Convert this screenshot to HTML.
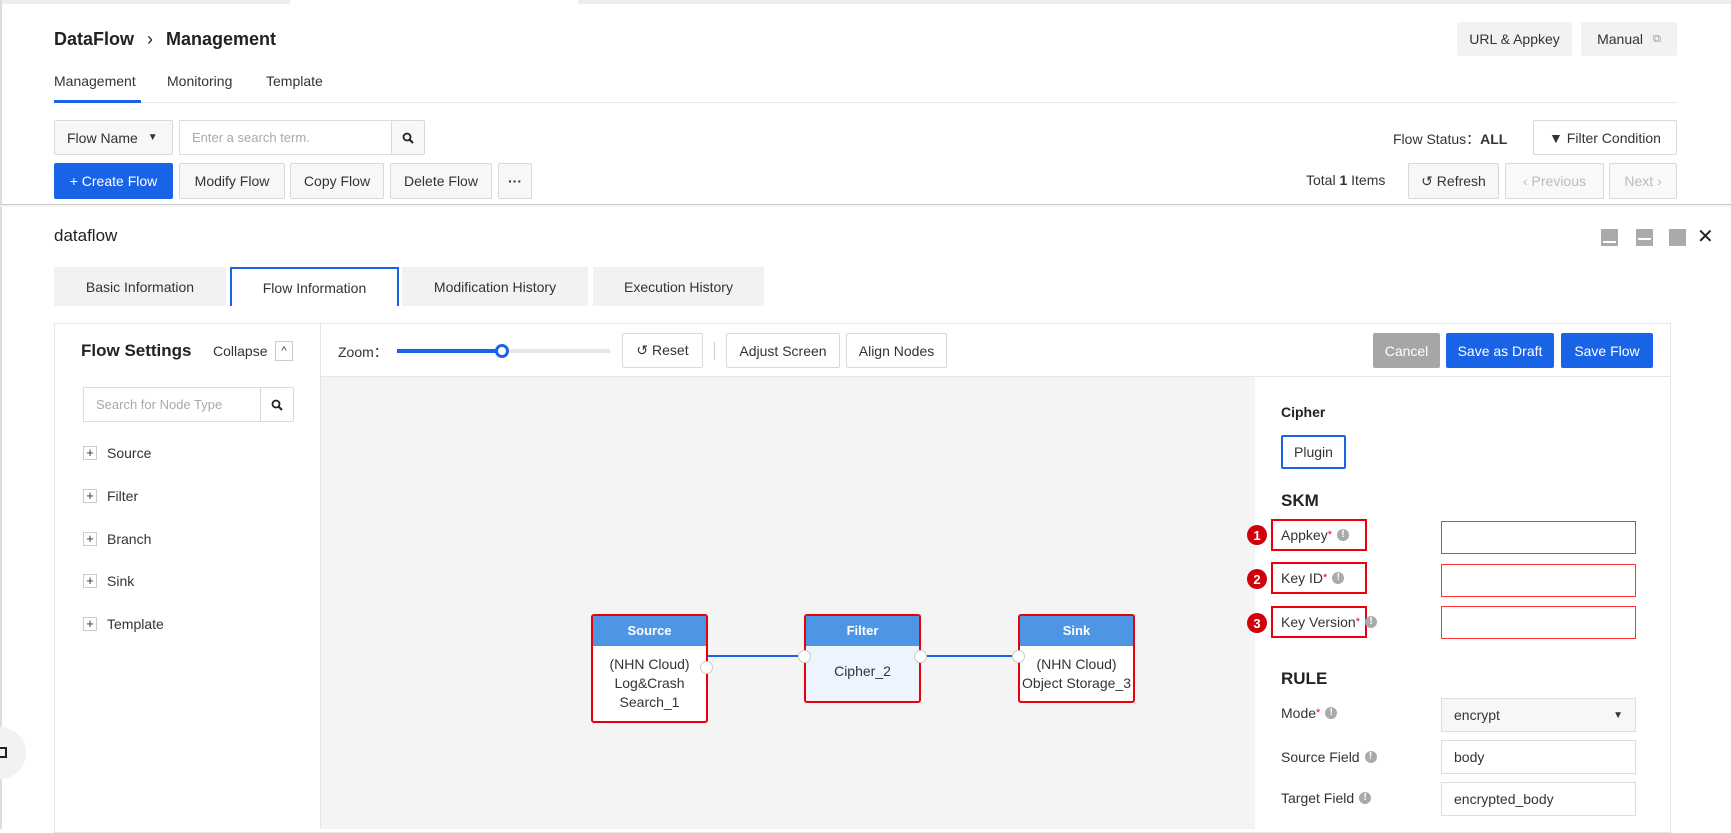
<!DOCTYPE html>
<html><head><meta charset="utf-8"><style>
*{box-sizing:border-box;margin:0;padding:0}
body{width:1731px;height:829px;overflow:hidden;background:#fff;font-family:"Liberation Sans",sans-serif;color:#333;font-size:14px;position:relative}
.a{position:absolute}
.btn{position:absolute;border:1px solid #d9d9d9;background:#f7f7f7;border-radius:2px;display:flex;align-items:center;justify-content:center;font-size:14px;color:#333;white-space:nowrap}
.gb{position:absolute;background:#f2f2f2;border-radius:2px;display:flex;align-items:center;justify-content:center;font-size:14px;color:#333}
.blue{background:#1863e6;border-color:#1863e6;color:#fff}
.inp{position:absolute;border:1px solid #ddd;background:#fff;display:flex;align-items:center;padding-left:12px;font-size:14px}
.tab{position:absolute;top:267px;height:39px;background:#f2f2f2;display:flex;align-items:center;justify-content:center;font-size:14px}
.tree{position:absolute;left:83px;font-size:14px;display:flex;align-items:center}
.tree i{display:inline-block;width:14px;height:14px;border:1px solid #ccc;font-style:normal;font-size:13px;line-height:11px;text-align:center;margin-right:10px;color:#333}
.node{position:absolute;border:2px solid #e8000b;border-radius:3px;background:#fff;text-align:center;font-size:14px}
.node .h{background:#4d96e6;color:#fff;font-weight:bold;height:30px;line-height:30px;font-size:13px}
.port{position:absolute;width:13px;height:13px;border-radius:50%;background:#fff;border:1px solid #ccc}
.lbl{position:absolute;font-size:14px;display:flex;align-items:center}
.rb{position:absolute;border:2px solid #e8000b}
.bad{position:absolute;width:20px;height:20px;border-radius:50%;background:#d0000b;color:#fff;font-weight:bold;font-size:13px;display:flex;align-items:center;justify-content:center}
.ex{display:inline-block;width:12px;height:12px;border-radius:50%;background:#aaa;color:#fff;font-size:10px;font-weight:bold;text-align:center;line-height:12px;margin-left:5px}
.st{color:#e8000b;font-size:11px;vertical-align:top}
</style></head><body>
<div class="a" style="left:0;top:0;width:290px;height:4px;background:#eee"></div>
<div class="a" style="left:578px;top:0;width:1153px;height:4px;background:#eee"></div>
<div class="a" style="left:0;top:0;width:2px;height:829px;background:#ddd"></div>

<div class="a" style="left:54px;top:29px;font-size:18px;font-weight:bold;color:#222">DataFlow <span style="font-weight:normal;margin:0 8px">›</span> Management</div>
<div class="gb" style="left:1457px;top:22px;width:115px;height:34px">URL &amp; Appkey</div>
<div class="gb" style="left:1581px;top:22px;width:96px;height:34px">Manual <span style="margin-left:10px;font-size:11px;color:#999">⧉</span></div>

<div class="a" style="left:54px;top:73px;font-size:14px">Management</div>
<div class="a" style="left:167px;top:73px;font-size:14px">Monitoring</div>
<div class="a" style="left:266px;top:73px;font-size:14px">Template</div>
<div class="a" style="left:54px;top:102px;width:1623px;height:1px;background:#e6e6e6"></div>
<div class="a" style="left:54px;top:100px;width:87px;height:3px;background:#1863e6"></div>

<div class="btn" style="left:54px;top:120px;width:119px;height:35px;justify-content:flex-start;padding-left:12px">Flow Name <span style="margin-left:10px;font-size:10px">▼</span></div>
<div class="inp" style="left:179px;top:120px;width:213px;height:35px;color:#aaa;font-size:13px">Enter a search term.</div>
<div class="btn" style="left:391px;top:120px;width:34px;height:35px;background:#f7f7f7"><svg width="12" height="12" viewBox="0 0 12 12"><circle cx="5" cy="5" r="3.5" fill="none" stroke="#222" stroke-width="1.8"/><path d="M7.5 7.5L11 11" stroke="#222" stroke-width="2"/></svg></div>
<div class="a" style="left:1393px;top:129px;font-size:14px">Flow Status：<b>ALL</b></div>
<div class="btn" style="left:1533px;top:120px;width:144px;height:35px;background:#fff">▼ Filter Condition</div>

<div class="btn blue" style="left:54px;top:163px;width:119px;height:36px">+ Create Flow</div>
<div class="btn" style="left:179px;top:163px;width:106px;height:36px">Modify Flow</div>
<div class="btn" style="left:290px;top:163px;width:94px;height:36px">Copy Flow</div>
<div class="btn" style="left:390px;top:163px;width:102px;height:36px">Delete Flow</div>
<div class="btn" style="left:498px;top:163px;width:34px;height:36px;font-weight:bold">···</div>
<div class="a" style="left:1306px;top:172px;font-size:14px">Total <b>1</b> Items</div>
<div class="btn" style="left:1408px;top:163px;width:91px;height:36px">↺ Refresh</div>
<div class="btn" style="left:1505px;top:163px;width:99px;height:36px;color:#bbb;background:#f9f9f9">‹ Previous</div>
<div class="btn" style="left:1609px;top:163px;width:68px;height:36px;color:#bbb;background:#f9f9f9">Next ›</div>

<div class="a" style="left:0;top:204px;width:1731px;height:3px;border-top:1px solid #ccc;background:#f3f3f3"></div>
<div class="a" style="left:54px;top:226px;font-size:17px;color:#222">dataflow</div>
<div class="a" style="left:1601px;top:229px;width:17px;height:17px;background:#aaa"><div style="margin:12px 2px 0;height:2px;background:#fff"></div></div>
<div class="a" style="left:1636px;top:229px;width:17px;height:17px;background:#aaa"><div style="margin:9px 2px 0;height:2px;background:#fff"></div></div>
<div class="a" style="left:1669px;top:229px;width:17px;height:17px;background:#aaa"></div>
<div class="a" style="left:1697px;top:224px;font-size:20px;color:#222">✕</div>

<div class="tab" style="left:54px;width:172px">Basic Information</div>
<div class="tab" style="left:230px;width:169px;background:#fff;border:2px solid #1863e6;border-bottom:none">Flow Information</div>
<div class="tab" style="left:402px;width:186px">Modification History</div>
<div class="tab" style="left:593px;width:171px">Execution History</div>

<div class="a" style="left:54px;top:323px;width:1617px;height:510px;border:1px solid #e6e6e6"></div>
<div class="a" style="left:320px;top:323px;width:1px;height:506px;background:#e6e6e6"></div>
<div class="a" style="left:81px;top:341px;font-size:17px;font-weight:bold;color:#222">Flow Settings</div>
<div class="a" style="left:213px;top:343px;font-size:14px">Collapse</div>
<div class="a" style="left:275px;top:341px;width:18px;height:20px;border:1px solid #ccc;font-size:11px;text-align:center;line-height:18px">^</div>
<div class="inp" style="left:83px;top:387px;width:178px;height:35px;color:#aaa;font-size:13px">Search for Node Type</div>
<div class="btn" style="left:260px;top:387px;width:34px;height:35px;background:#fff"><svg width="12" height="12" viewBox="0 0 12 12"><circle cx="5" cy="5" r="3.5" fill="none" stroke="#222" stroke-width="1.8"/><path d="M7.5 7.5L11 11" stroke="#222" stroke-width="2"/></svg></div>
<div class="tree" style="top:445px"><i>+</i>Source</div>
<div class="tree" style="top:488px"><i>+</i>Filter</div>
<div class="tree" style="top:531px"><i>+</i>Branch</div>
<div class="tree" style="top:573px"><i>+</i>Sink</div>
<div class="tree" style="top:616px"><i>+</i>Template</div>
<div class="a" style="left:-26px;top:727px;width:52px;height:52px;border-radius:50%;background:#f2f2f2"></div>
<div class="a" style="left:-4px;top:747px;width:11px;height:11px;border:2px solid #222"></div>

<div class="a" style="left:321px;top:376px;width:1350px;height:1px;background:#e6e6e6"></div>
<div class="a" style="left:338px;top:342px;font-size:14px">Zoom：</div>
<div class="a" style="left:397px;top:349px;width:213px;height:4px;background:#e6e6e6"></div>
<div class="a" style="left:397px;top:349px;width:105px;height:4px;background:#1863e6"></div>
<div class="a" style="left:495px;top:344px;width:14px;height:14px;border-radius:50%;background:#fff;border:3px solid #1863e6"></div>
<div class="btn" style="left:622px;top:333px;width:81px;height:35px;background:#fff">↺ Reset</div>
<div class="a" style="left:714px;top:342px;width:1px;height:18px;background:#ccc"></div>
<div class="btn" style="left:726px;top:333px;width:114px;height:35px;background:#fff">Adjust Screen</div>
<div class="btn" style="left:846px;top:333px;width:101px;height:35px;background:#fff">Align Nodes</div>
<div class="btn" style="left:1373px;top:333px;width:67px;height:35px;background:#a6a6a6;border-color:#a6a6a6;color:#fff">Cancel</div>
<div class="btn blue" style="left:1446px;top:333px;width:108px;height:35px">Save as Draft</div>
<div class="btn blue" style="left:1561px;top:333px;width:92px;height:35px">Save Flow</div>

<div class="a" style="left:321px;top:377px;width:934px;height:452px;background:#f4f4f4"></div>
<div class="a" style="left:707px;top:655px;width:97px;height:2px;background:#1863e6"></div>
<div class="a" style="left:921px;top:655px;width:97px;height:2px;background:#1863e6"></div>
<div class="node" style="left:591px;top:614px;width:117px;height:109px"><div class="h">Source</div><div style="padding-top:9px;line-height:19px">(NHN Cloud)<br>Log&amp;Crash<br>Search_1</div></div>
<div class="node" style="left:804px;top:614px;width:117px;height:89px;background:#eef4fd"><div class="h">Filter</div><div style="padding-top:17px">Cipher_2</div></div>
<div class="node" style="left:1018px;top:614px;width:117px;height:89px"><div class="h">Sink</div><div style="padding-top:9px;line-height:19px">(NHN Cloud)<br>Object Storage_3</div></div>
<div class="port" style="left:700px;top:661px"></div>
<div class="port" style="left:798px;top:650px"></div>
<div class="port" style="left:914px;top:650px"></div>
<div class="port" style="left:1012px;top:650px"></div>

<div class="a" style="left:1281px;top:404px;font-size:14px;font-weight:bold;color:#222">Cipher</div>
<div class="a" style="left:1281px;top:435px;width:65px;height:34px;border:2px solid #1863e6;border-radius:2px;display:flex;align-items:center;justify-content:center;font-size:14px">Plugin</div>
<div class="a" style="left:1281px;top:491px;font-size:17px;font-weight:bold;color:#222">SKM</div>
<div class="rb" style="left:1271px;top:519px;width:96px;height:32px"></div>
<div class="bad" style="left:1247px;top:525px">1</div>
<div class="lbl" style="left:1281px;top:527px">Appkey<span class="st">*</span><span class="ex">!</span></div>
<div class="rb" style="left:1271px;top:562px;width:96px;height:32px"></div>
<div class="bad" style="left:1247px;top:569px">2</div>
<div class="lbl" style="left:1281px;top:570px">Key ID<span class="st">*</span><span class="ex">!</span></div>
<div class="rb" style="left:1271px;top:606px;width:96px;height:32px"></div>
<div class="bad" style="left:1247px;top:613px">3</div>
<div class="lbl" style="left:1281px;top:614px">Key Version<span class="st">*</span><span class="ex">!</span></div>
<div class="a" style="left:1441px;top:521px;width:195px;height:33px;border:1px solid #f33"></div>
<div class="a" style="left:1441px;top:564px;width:195px;height:33px;border:1px solid #f33"></div>
<div class="a" style="left:1441px;top:606px;width:195px;height:33px;border:1px solid #f33"></div>
<div class="a" style="left:1281px;top:669px;font-size:17px;font-weight:bold;color:#222">RULE</div>
<div class="lbl" style="left:1281px;top:705px">Mode<span class="st">*</span><span class="ex">!</span></div>
<div class="inp" style="left:1441px;top:698px;width:195px;height:34px;background:#f7f7f7">encrypt<span style="position:absolute;right:12px;font-size:10px">▼</span></div>
<div class="lbl" style="left:1281px;top:749px">Source Field<span class="ex">!</span></div>
<div class="inp" style="left:1441px;top:740px;width:195px;height:34px">body</div>
<div class="lbl" style="left:1281px;top:790px">Target Field<span class="ex">!</span></div>
<div class="inp" style="left:1441px;top:782px;width:195px;height:34px">encrypted_body</div>
</body></html>
